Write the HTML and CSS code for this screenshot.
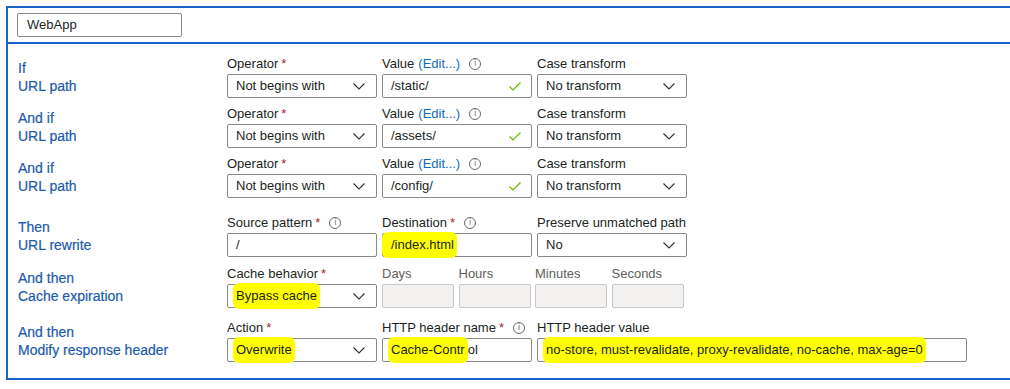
FILE: index.html
```html
<!DOCTYPE html>
<html lang="en">
<head>
    <meta charset="UTF-8">
    <title>Rule</title>
    <link rel="stylesheet" href="styles.css">
</head>
<body>
<div class="rule">
    <div class="rule-head">
        <div class="box name">WebApp</div>
    </div>
    <div class="rule-body">

        <div class="row">
            <div class="cond"><span>If</span><span>URL path</span></div>
            <div class="col">
                <div class="lbl">Operator <b>*</b></div>
                <div class="box sel">Not begins with<svg class="chev" viewBox="0 0 12 7"><polyline points="0.5,0.5 6,6 11.5,0.5"/></svg></div>
            </div>
            <div class="col">
                <div class="lbl">Value <a href="#">(Edit...)</a><i class="info">i</i></div>
                <div class="box">/static/<svg class="ok" viewBox="0 0 12 9"><polyline points="0.5,4.5 4,8 11.5,0.5"/></svg></div>
            </div>
            <div class="col">
                <div class="lbl">Case transform</div>
                <div class="box sel">No transform<svg class="chev" viewBox="0 0 12 7"><polyline points="0.5,0.5 6,6 11.5,0.5"/></svg></div>
            </div>
        </div>

        <div class="row">
            <div class="cond"><span>And if</span><span>URL path</span></div>
            <div class="col">
                <div class="lbl">Operator <b>*</b></div>
                <div class="box sel">Not begins with<svg class="chev" viewBox="0 0 12 7"><polyline points="0.5,0.5 6,6 11.5,0.5"/></svg></div>
            </div>
            <div class="col">
                <div class="lbl">Value <a href="#">(Edit...)</a><i class="info">i</i></div>
                <div class="box">/assets/<svg class="ok" viewBox="0 0 12 9"><polyline points="0.5,4.5 4,8 11.5,0.5"/></svg></div>
            </div>
            <div class="col">
                <div class="lbl">Case transform</div>
                <div class="box sel">No transform<svg class="chev" viewBox="0 0 12 7"><polyline points="0.5,0.5 6,6 11.5,0.5"/></svg></div>
            </div>
        </div>

        <div class="row last-if">
            <div class="cond"><span>And if</span><span>URL path</span></div>
            <div class="col">
                <div class="lbl">Operator <b>*</b></div>
                <div class="box sel">Not begins with<svg class="chev" viewBox="0 0 12 7"><polyline points="0.5,0.5 6,6 11.5,0.5"/></svg></div>
            </div>
            <div class="col">
                <div class="lbl">Value <a href="#">(Edit...)</a><i class="info">i</i></div>
                <div class="box">/config/<svg class="ok" viewBox="0 0 12 9"><polyline points="0.5,4.5 4,8 11.5,0.5"/></svg></div>
            </div>
            <div class="col">
                <div class="lbl">Case transform</div>
                <div class="box sel">No transform<svg class="chev" viewBox="0 0 12 7"><polyline points="0.5,0.5 6,6 11.5,0.5"/></svg></div>
            </div>
        </div>

        <div class="row then">
            <div class="cond"><span>Then</span><span>URL rewrite</span></div>
            <div class="col">
                <div class="lbl">Source pattern <b>*</b><i class="info">i</i></div>
                <div class="box">/</div>
            </div>
            <div class="col">
                <div class="lbl">Destination <b>*</b><i class="info">i</i></div>
                <div class="box"><span class="hl hl-left">/index.html</span></div>
            </div>
            <div class="col">
                <div class="lbl">Preserve unmatched path</div>
                <div class="box sel">No<svg class="chev" viewBox="0 0 12 7"><polyline points="0.5,0.5 6,6 11.5,0.5"/></svg></div>
            </div>
        </div>

        <div class="row cache">
            <div class="cond"><span>And then</span><span>Cache expiration</span></div>
            <div class="col">
                <div class="lbl">Cache behavior <b>*</b></div>
                <div class="box sel"><span class="hl">Bypass cache</span><svg class="chev" viewBox="0 0 12 7"><polyline points="0.5,0.5 6,6 11.5,0.5"/></svg></div>
            </div>
            <div class="duration">
                <div class="col small">
                    <div class="lbl dim">Days</div>
                    <div class="box off"></div>
                </div>
                <div class="col small">
                    <div class="lbl dim">Hours</div>
                    <div class="box off"></div>
                </div>
                <div class="col small">
                    <div class="lbl dim">Minutes</div>
                    <div class="box off"></div>
                </div>
                <div class="col small">
                    <div class="lbl dim">Seconds</div>
                    <div class="box off"></div>
                </div>
            </div>
        </div>

        <div class="row">
            <div class="cond"><span>And then</span><span>Modify response header</span></div>
            <div class="col">
                <div class="lbl">Action <b>*</b></div>
                <div class="box sel"><span class="hl">Overwrite</span><svg class="chev" viewBox="0 0 12 7"><polyline points="0.5,0.5 6,6 11.5,0.5"/></svg></div>
            </div>
            <div class="col">
                <div class="lbl">HTTP header name <b>*</b><i class="info">i</i></div>
                <div class="box"><span class="hl">Cache-Contr</span>ol</div>
            </div>
            <div class="col wide">
                <div class="lbl">HTTP header value</div>
                <div class="box"><span class="hl">no-store, must-revalidate, proxy-revalidate, no-cache, max-age=0</span></div>
            </div>
        </div>

    </div>
</div>
</body>
</html>
```

FILE: styles.css
```css
body{
    margin: 0;
    padding: 6px 0 0 6px;
    background: #fff;
    font-family: "Segoe UI", "Liberation Sans", Arial, sans-serif;
    font-size: 13px;
    color: #201f1e;
    overflow: hidden;
}

.rule{
    width: 1004px;
    box-sizing: border-box;
    border: 2px solid #1a64c8;
    border-right: none;
}
.rule-head{
    padding: 5px 9px 5px;
    border-bottom: 2px solid #1a64c8;
}
.rule-body{
    padding: 12px 0 16px 10px;
}

.row{
    display: flex;
    gap: 5px;
    margin-bottom: 8px;
}
.row:last-child{ margin-bottom: 0; }
.row.last-if{ margin-bottom: 17px; }
.row.then{ margin-bottom: 9px; }
.row.cache{ margin-bottom: 12px; }

.cond{
    width: 204px;
    padding-top: 3px;
    display: flex;
    flex-direction: column;
    color: #1d5aab;
    font-size: 14px;
    line-height: 18px;
    -webkit-text-stroke: 0.2px #1d5aab;
}

.col{
    width: 150px;
    display: flex;
    flex-direction: column;
}
.col.wide{ width: 430px; }
.col.small{ width: 72px; }

.duration{
    display: flex;
    gap: 4.5px;
}

.lbl{
    height: 18px;
    line-height: 16px;
    white-space: nowrap;
    display: flex;
    align-items: flex-start;
}
.lbl b{
    color: #a4262c;
    font-weight: normal;
    margin-left: 3px;
}
.lbl a{
    color: #0f6cbd;
    text-decoration: none;
    margin-left: 4px;
}
.lbl.dim{ color: #605e5c; }

.info{
    width: 10px;
    height: 10px;
    border: 1px solid #6b6a68;
    border-radius: 50%;
    margin: 2px 0 0 9px;
    font-style: normal;
    font-size: 8px;
    line-height: 10px;
    text-align: center;
    color: #6b6a68;
    font-family: "DejaVu Sans", sans-serif;
}

.box{
    height: 24px;
    box-sizing: border-box;
    border: 1px solid #8a8886;
    border-radius: 2px;
    padding: 0 8px;
    line-height: 22px;
    display: flex;
    align-items: center;
    white-space: nowrap;
}
.box.name{
    width: 165px;
    padding-left: 9px;
}
.box.off{
    background: #f3f2f1;
    border-color: #c8c6c4;
}

.chev{
    margin-left: auto;
    width: 12px;
    height: 7px;
    margin-right: 3px;
    fill: none;
    stroke: #323130;
    stroke-width: 1.1;
}
.ok{
    margin-left: auto;
    width: 12px;
    height: 9px;
    margin-right: 2px;
    fill: none;
    stroke: #6bb700;
    stroke-width: 1.2;
}

.hl{
    background: #ffff00;
    border-radius: 6px;
    padding: 2px 3px;
    margin-left: -3px;
}
.hl-left{
    margin-left: -9px;
    padding-left: 9px;
}
```
